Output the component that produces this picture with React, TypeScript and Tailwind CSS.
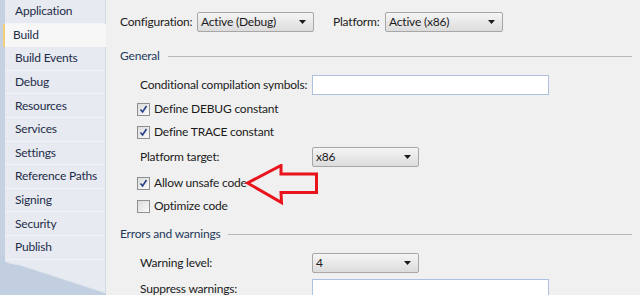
import * as React from "react";

const tabs = [
  "Application",
  "Build",
  "Build Events",
  "Debug",
  "Resources",
  "Services",
  "Settings",
  "Reference Paths",
  "Signing",
  "Security",
  "Publish",
];

function Dropdown({ value, width }: { value: string; width: string }) {
  return (
    <div
      className={`${width} h-[20px] shrink-0 flex items-center justify-between pl-[3px] pr-[7px] rounded-[2px] border border-[#a7a7a7] bg-linear-to-b from-[#f5f5f5] to-[#dcdcdc] text-[#1b1b1b]`}
    >
      <span>{value}</span>
      <svg width="7" height="4" viewBox="0 0 7 4">
        <path d="M0 0H7L3.5 4Z" fill="#1b1b1b" />
      </svg>
    </div>
  );
}

function TextBox({ width }: { width: string }) {
  return <div className={`${width} h-[20px] shrink-0 bg-white border border-[#abc1de]`} />;
}

function Check({ checked, label }: { checked: boolean; label: string }) {
  return (
    <div className="h-[22px] flex items-center pl-[31px]">
      <div className="w-[13px] h-[13px] border border-[#8e8f8f] bg-linear-to-br from-[#dcdcdc] to-[#fafafa] flex items-center justify-center">
        {checked && (
          <svg width="9" height="9" viewBox="0 0 9 9">
            <path d="M1.5 4.5L3.6 7L7.5 1" stroke="#243f86" strokeWidth="1.6" fill="none" />
          </svg>
        )}
      </div>
      <span className="ml-[4px]">{label}</span>
    </div>
  );
}

function Section({ title }: { title: string }) {
  return (
    <div className="h-[16px] flex items-center pl-[14px] pr-[8px] text-[#1e395b]">
      <span>{title}</span>
      <div className="flex-1 h-px bg-[#b9b9b9] ml-[8px]" />
    </div>
  );
}

export default function App() {
  return (
    <div
      className="w-[640px] h-[295px] overflow-hidden flex bg-[#f0f0f0] text-[12px] tracking-[-0.2px] leading-none whitespace-nowrap"
      style={{ fontFamily: 'Lato, "Noto Sans", sans-serif' }}
    >
      {/* Side tabs */}
      <div className="relative w-[106px] h-full flex shrink-0">
        <div className="w-[5px] h-full bg-[#c6d2e2]" />
        <div className="flex-1 h-full flex flex-col bg-[#e7eaf0] border-r border-[#d3d9e3]">
          {tabs.map((t) => {
            const active = t === "Build";
            return (
              <div
                key={t}
                className={
                  active
                    ? "h-[23.6px] flex items-center pl-[8px] bg-[#f7f7f7] border-l-2 border-[#f2cf78] -ml-[2px] -mr-px text-[#1e2c4a]"
                    : "h-[23.6px] flex items-center pl-[10px] border-b border-[#f2f4f7] text-[#1e2c4a]"
                }
              >
                {t}
              </div>
            );
          })}
        </div>
        <svg className="absolute left-0 bottom-0" width="106" height="40" viewBox="0 0 106 40">
          <path d="M5 6 Q6 8 20 10 L106 38 V40 H0 V0 H5 Z" fill="#c2cfe0" />
          <path d="M5 6 Q6 8 20 10 L106 38" stroke="#dfe5ee" strokeWidth="1" fill="none" />
        </svg>
      </div>

      {/* Property page */}
      <div className="flex-1 flex flex-col text-[#1b1b1b]">
        <div className="pt-[12px] pl-[14px] flex items-center h-[32px]">
          <span className="w-[77px] shrink-0">Configuration:</span>
          <Dropdown value="Active (Debug)" width="w-[117px]" />
          <span className="ml-[19px] w-[52px] shrink-0">Platform:</span>
          <Dropdown value="Active (x86)" width="w-[118px]" />
        </div>
        <div className="mt-[12px] ml-[12px] h-px bg-[#b9b9b9]" />

        <div className="mt-[4px]">
          <Section title="General" />
        </div>
        <div className="mt-[11px] h-[20px] flex items-center pl-[34px]">
          <span className="w-[172px] shrink-0">Conditional compilation symbols:</span>
          <TextBox width="w-[237px]" />
        </div>
        <div className="mt-[3px]">
          <Check checked label="Define DEBUG constant" />
        </div>
        <div className="mt-[1px]">
          <Check checked label="Define TRACE constant" />
        </div>
        <div className="mt-[4px] h-[20px] flex items-center pl-[34px]">
          <span className="w-[172px] shrink-0">Platform target:</span>
          <Dropdown value="x86" width="w-[107px]" />
        </div>
        <div className="relative mt-[5px]">
          <Check checked label="Allow unsafe code" />
          <svg className="absolute left-[139px] top-[-8px]" width="74" height="42" viewBox="0 0 74 42">
            <path
              d="M2.5 19 L36 1.5 L36 10 L71.5 10 L71.5 28.5 L36 28.5 L36.5 38.5 Z"
              fill="none"
              stroke="#e8131b"
              strokeWidth="3"
              strokeLinejoin="miter"
            />
          </svg>
        </div>
        <div className="mt-[1px]">
          <Check checked={false} label="Optimize code" />
        </div>

        <div className="mt-[9px]">
          <Section title="Errors and warnings" />
        </div>
        <div className="mt-[11px] h-[20px] flex items-center pl-[34px]">
          <span className="w-[172px] shrink-0">Warning level:</span>
          <Dropdown value="4" width="w-[107px]" />
        </div>
        <div className="mt-[6px] h-[20px] flex items-center pl-[34px]">
          <span className="w-[172px] shrink-0">Suppress warnings:</span>
          <TextBox width="w-[237px]" />
        </div>
      </div>
    </div>
  );
}
